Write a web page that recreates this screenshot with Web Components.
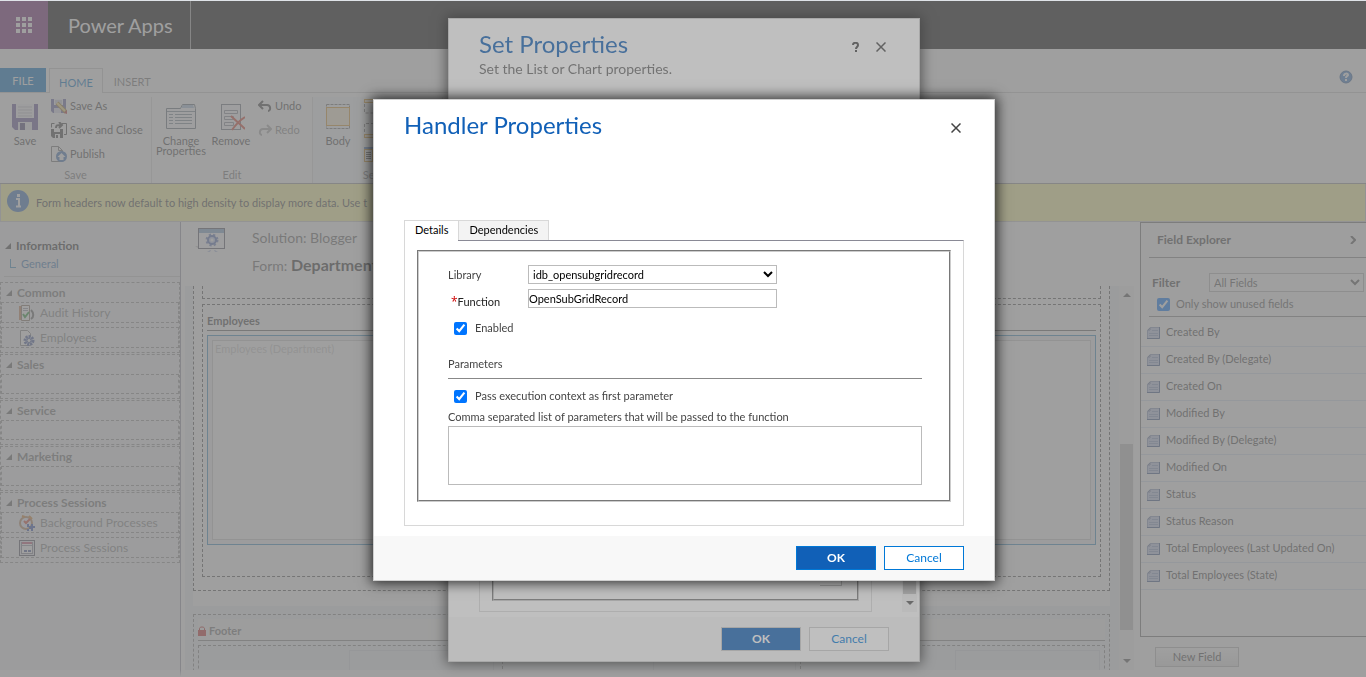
<!DOCTYPE html>
<html lang="en">
<head>
<meta charset="utf-8">
<meta name="viewport" content="width=device-width, initial-scale=1">
<title>Power Apps - Form editor</title>
<style>
  html, body { margin: 0; height: 100%; }
  body {
    font-family: Lato, "Open Sans", sans-serif;
    font-size: 11px;
    line-height: 16px;
    color: #444;
    background: #fff;
    overflow: hidden;
  }
</style>
</head>
<body>
<form-editor></form-editor>

<script>
// Small base class: every element only has to provide its template
class BaseElement extends HTMLElement {
  constructor() {
    super();
    this.attachShadow({ mode: "open" });
  }

  connectedCallback() {
    this.shadowRoot.innerHTML = `<style>*, *::before, *::after { box-sizing: border-box; }</style>${this.template()}`;
  }

  attr(name) { return this.getAttribute(name) || ""; }
}

// Icon markup shared by the ribbon, the navigation and the lists
const ICONS = {
  save: `<svg width="28" height="28" viewBox="0 0 28 28"><path d="M1 1h26v26H4l-3-3z" fill="#6a5a9e"/><rect x="5" y="1" width="18" height="14" fill="#f4f4fa"/><path d="M7 4h14M7 7h14M7 10h14M7 13h14" stroke="#c3c3cc"/><rect x="7" y="19" width="14" height="8" fill="#e8e8f0"/><rect x="9" y="20" width="5" height="7" fill="#4c4478"/></svg>`,
  saveAs: `<svg width="16" height="16" viewBox="0 0 16 16"><path d="M0 1h15v14H2l-2-2z" fill="#6a6aa8"/><rect x="3" y="1" width="9" height="6" fill="#f2f2fa"/><path d="M4 3h7M4 5h7" stroke="#aab"/><rect x="3" y="10" width="7" height="5" fill="#dde"/><path d="M6 5l9 9" stroke="#a8842c" stroke-width="4"/><path d="M6 5l8 8" stroke="#f7dd86" stroke-width="2"/><path d="M13 15l3-3v4z" fill="#b33"/></svg>`,
  saveClose: `<svg width="16" height="16" viewBox="0 0 16 16"><path d="M3.500 1.500h-3v4M11 1.500h4.500v11H13" fill="none" stroke="#444"/><path d="M0 7h12v9H2l-2-2z" fill="#444"/><rect x="3" y="7" width="6" height="3" fill="#fff"/><rect x="4" y="12" width="5" height="4" fill="#fff"/><rect x="5" y="13" width="2" height="3" fill="#444"/><path d="M5 6c0-3 1-3 5-3M8 0l3 3-3 3" fill="none" stroke="#444" stroke-width="2"/></svg>`,
  publish: `<svg width="16" height="16" viewBox="0 0 16 16"><path d="M.5.500h7l4 4v11H.5z" fill="#fff" stroke="#777"/><path d="M7.500.500v4h4" fill="none" stroke="#777"/><circle cx="10.500" cy="10.500" r="5.500" fill="#4274bb"/><path d="M10.500 7l4 4h-2v3h-4v-3h-2z" fill="#fff"/></svg>`,
  properties: `<svg width="30" height="28" viewBox="0 0 30 28"><path d="M.5 5.500h14l2-4h12l1 4v20H.5z" fill="#f8fafc" stroke="#67727c"/><path d="M15 5l2-3h10l1 3z" fill="#a8c2dd"/><path d="M1 8.500h28M3 11.500h4M9 11.500h17M3 14.500h4M9 14.500h17M3 17.500h4M9 17.500h17M3 20.500h4M9 20.500h17" stroke="#7e8c9a"/></svg>`,
  remove: `<svg width="28" height="28" viewBox="0 0 28 28"><rect x="4.500" y="1.500" width="19" height="25" fill="#fafafc" stroke="#6c7480"/><path d="M7.500 7.500h13v3h-13zM7.500 13.500h9v3h-9zM7.500 19.500h9v3h-9z" fill="none" stroke="#8a8f98"/><path d="M14 13c4 4 9 8 14 13M28 14c-5 3-9 7-13 13" fill="none" stroke="#d8432f" stroke-width="2"/></svg>`,
  undo: `<svg width="14" height="12" viewBox="0 0 14 12"><path d="M5 1L1 5l4 4M1 5h8c4 0 4 6 1 6" fill="none" stroke="#444" stroke-width="2"/></svg>`,
  redo: `<svg width="14" height="12" viewBox="0 0 14 12"><path d="M9 1l4 4-4 4M13 5H5c-4 0-4 6-1 6" fill="none" stroke="#aaa" stroke-width="2"/></svg>`,
  section: `<svg width="28" height="28" viewBox="0 0 28 28"><rect x="2.500" y="1.500" width="23" height="24" fill="none" stroke="#777" stroke-dasharray="3 1"/><rect x="2.500" y="4.500" width="23" height="18" fill="#fbecd0" stroke="#d89a2c"/></svg>`,
  header: `<svg width="16" height="16" viewBox="0 0 16 16"><rect x=".5" y="1.500" width="15" height="3" fill="#fbecd0" stroke="#d89a2c"/><path d="M.5 6v9h15" fill="none" stroke="#777" stroke-dasharray="3 2"/></svg>`,
  footer: `<svg width="16" height="16" viewBox="0 0 16 16"><path d="M.5 10V1.500h15" fill="none" stroke="#777" stroke-dasharray="3 2"/><rect x=".5" y="12.500" width="15" height="3" fill="#fbecd0" stroke="#d89a2c"/></svg>`,
  navigation: `<svg width="16" height="16" viewBox="0 0 16 16"><path d="M0 1h16v2H0z" fill="#5c88c8"/><rect x=".5" y="3.500" width="8" height="12" fill="#fff" stroke="#d89a2c"/><path d="M2 6.500h5M2 8.500h5M2 10.500h5M2 12.500h5" stroke="#555"/></svg>`,
  audit: `<svg width="16" height="16" viewBox="0 0 16 16"><path d="M2.500.500h8v15h-8z" fill="#fff" stroke="#887766"/><path d="M1 1v14" stroke="#c8875a" stroke-width="2"/><path d="M4 3.500h5M4 5.500h5" stroke="#99a"/><path d="M4 9l2 3 4-5" fill="none" stroke="#2f9a3b" stroke-width="2"/><path d="M12 5c3 3 3 7 0 9" fill="none" stroke="#666" stroke-width="2"/></svg>`,
  entity: `<svg width="16" height="16" viewBox="0 0 16 16"><path d="M1.500.500h7l3 3v12h-10z" fill="#fff" stroke="#888"/><circle cx="10" cy="10.500" r="4" fill="#a8b8e0" stroke="#4a5fa0" stroke-width="3" stroke-dasharray="2 1"/><circle cx="10" cy="10.500" r="2" fill="#fff" stroke="#4a5fa0"/></svg>`,
  process: `<svg width="16" height="16" viewBox="0 0 16 16"><circle cx="7" cy="8" r="6" fill="#eef" stroke="#b98a5f" stroke-width="2"/><path d="M3 1l3 1M10 1l3 3" stroke="#d8842f" stroke-width="2"/><path d="M5 6l2 2 4-4" fill="none" stroke="#d84b34" stroke-width="2"/><path d="M8 9h2v2h2V9h2v2h2v2h-2v3h-2v-2h-2v2H8v-2h2v-2H8z" fill="#3457b5"/></svg>`,
  session: `<svg width="16" height="16" viewBox="0 0 16 16"><rect x=".5" y=".5" width="15" height="15" fill="#e8e8f0" stroke="#556"/><rect x="2.500" y="2.500" width="11" height="11" fill="#fff" stroke="#889"/><rect x="3" y="2" width="10" height="2" fill="#c65a78"/><path d="M3 5h10v1H3z" fill="#99a"/><path d="M5 10h3v2H5zM9 10h3v2H9z" fill="#4a5a98"/></svg>`,
  field: `<svg width="13" height="12" viewBox="0 0 13 12"><path d="M3 0h10v12H0V3z" fill="#bccbe8"/><path d="M0 11.500h12.500V0" fill="none" stroke="#3f5a8c"/><path d="M.5 3v8M3 .5h9" stroke="#8c9cc0"/><path d="M1 3h2V1z" fill="#fff" stroke="#6c7ca0"/><path d="M5 3.500h6M2 6.500h9M2 8.500h9" stroke="#8fa0c8"/></svg>`,
  form: `<svg width="30" height="28" viewBox="0 0 30 28"><path d="M0 18h4v3z" fill="#ccc"/><rect x="3.500" y=".5" width="26" height="20" fill="#fafafc" stroke="#556"/><path d="M4 1h25v4H4z" fill="#7da5cf"/><circle cx="17" cy="12" r="5" fill="none" stroke="#6d84c4" stroke-width="3" stroke-dasharray="2 2"/><circle cx="17" cy="12" r="4" fill="#c4d0f2" stroke="#5670b8" stroke-width="2"/><circle cx="17" cy="12" r="1.500" fill="#fff"/><path d="M12 24h3l1-2h3l1 2h3l-3-2h-5z" fill="#b3c0e2"/></svg>`,
  lock: `<svg width="8" height="10" viewBox="0 0 8 10"><path d="M1.500 5V2.500c0-2 5-2 5 0V5" fill="none" stroke="#b22" stroke-width="1"/><rect y="4" width="8" height="6" fill="#c82c2c"/></svg>`,
  info: `<svg width="22" height="22" viewBox="0 0 22 22"><circle cx="11" cy="11" r="11" fill="#3d74bd"/><path d="M9 9h3v7M9 16.500h5" fill="none" stroke="#fff" stroke-width="2"/><rect x="10" y="4" width="3" height="3" fill="#fff"/></svg>`,
  help: `<svg width="14" height="14" viewBox="0 0 14 14"><circle cx="7" cy="7" r="6" fill="#3d7dc8" stroke="#2c5d9c"/><path d="M5 6c0-3 4-3 4-1 0 1-2 1-2 3M7 9v2" fill="none" stroke="#fff" stroke-width="2"/></svg>`,
  close: `<svg width="10" height="10" viewBox="0 0 10 10"><path d="M.5.500l9 9M9.500.500l-9 9" fill="none" stroke="#444" stroke-width="1.500"/></svg>`,
  question: `<svg width="8" height="10" viewBox="0 0 8 10"><path d="M1 3c0-3 5-3 5 0 0 2-2 2-2 4M4 8v2" fill="none" stroke="#444" stroke-width="2"/></svg>`
};

// AppBar: black bar with the launcher
class AppBar extends BaseElement {
  template() {
    return /* html */`
      <style>
        :host { display: flex; height: 48px; background: #000; color: #fff; }
        button { display: grid; place-content: center; grid-template-columns: repeat(3, 4px); gap: 2px; width: 48px; border: 0; padding: 0; background: #742774; }
        i { height: 4px; background: #fff; }
        span { display: flex; align-items: center; padding: 0 17px 0 20px; font-size: 20px; border-right: 1px solid #999; }
      </style>
      <button aria-label="App launcher">${"<i></i>".repeat(9)}</button>
      <span>Power Apps</span>
    `;
  }
}

// RibbonTabs: FILE / HOME / INSERT plus the help icon
class RibbonTabs extends BaseElement {
  template() {
    return /* html */`
      <style>
        :host { display: flex; align-items: flex-end; height: 44px; border-bottom: 1px solid #ccc; }
        a { height: 24px; padding: 0 9px; line-height: 28px; color: #777; text-decoration: none; }
        .file { width: 46px; padding: 0; text-align: center; background: #0072c6; color: #fff; line-height: 26px; }
        .active { height: 25px; margin: 0 2px 0 3px; border: 1px solid #ccc; border-bottom: 0; background: #fff; color: #0072c6; margin-bottom: -1px; }
        .help { margin-left: auto; padding: 0 13px 0 0; height: 22px; line-height: 0; }
      </style>
      <a class="file" href="#">FILE</a>
      <a class="active" href="#">HOME</a>
      <a href="#">INSERT</a>
      <a class="help" href="#" aria-label="Help">${ICONS.help}</a>
    `;
  }
}

// RibbonButton: large (icon above) or small (icon at the left)
class RibbonButton extends BaseElement {
  template() {
    return /* html */`
      <style>
        :host { display: block; }
        button { display: flex; align-items: center; gap: 3px; height: 24px; padding: 0; border: 0; background: none; font: inherit; color: #444; white-space: nowrap; }
        :host([large]) button { flex-direction: column; gap: 5px; width: 50px; height: auto; line-height: 10px; white-space: normal; }
        :host([disabled]) button { color: #888; }
        svg { display: block; flex: none; }
      </style>
      <button aria-label="${this.attr("label") || this.textContent}">${ICONS[this.attr("icon")]}<span><slot></slot></span></button>
    `;
  }
}

// RibbonGroup: buttons with the caption of the group below
class RibbonGroup extends BaseElement {
  template() {
    return /* html */`
      <style>
        :host { display: flex; flex-direction: column; justify-content: space-between; border-right: 1px solid #ddd; }
        .row { display: flex; }
        .caption { text-align: center; color: #777; }
      </style>
      <div class="row"><slot></slot></div>
      <div class="caption">${this.attr("caption")}</div>
    `;
  }
}

class RibbonBar extends BaseElement {
  template() {
    return /* html */`
      <style>
        :host { display: flex; height: 91px; padding: 4px 0 0; border-bottom: 1px solid #999; }
        ribbon-group.save { width: 152px; }
        ribbon-group.edit { width: 161px; }
        ribbon-group.select { width: 130px; background: #f6fafc; }
        .col { margin: -3px 0 0 1px; }
        .edit .col { margin-left: 2px; }
        .big { padding-top: 6px; }
        .first { padding-left: 4px; }
      </style>
      <ribbon-group class="save" caption="Save">
        <ribbon-button class="big" large icon="save">Save</ribbon-button>
        <div class="col">
          <ribbon-button icon="saveAs">Save As</ribbon-button>
          <ribbon-button icon="saveClose">Save and Close</ribbon-button>
          <ribbon-button icon="publish">Publish</ribbon-button>
        </div>
      </ribbon-group>
      <ribbon-group class="edit" caption="Edit">
        <ribbon-button class="big first" large icon="properties">Change Properties</ribbon-button>
        <ribbon-button class="big" large icon="remove">Remove</ribbon-button>
        <div class="col">
          <ribbon-button icon="undo">Undo</ribbon-button>
          <ribbon-button icon="redo" disabled>Redo</ribbon-button>
        </div>
      </ribbon-group>
      <ribbon-group class="select" caption="Select">
        <ribbon-button class="big" large icon="section">Body</ribbon-button>
        <div class="col">
          <ribbon-button icon="header" label="Header"></ribbon-button>
          <ribbon-button icon="footer" label="Footer"></ribbon-button>
          <ribbon-button icon="navigation" label="Navigation"></ribbon-button>
        </div>
      </ribbon-group>
    `;
  }
}

class InfoBanner extends BaseElement {
  template() {
    return /* html */`
      <style>
        :host { display: flex; gap: 7px; height: 38px; padding: 6px; border: 1px solid #ccc; border-top: 0; background: #fffa9c; }
        svg { flex: none; }
        span { padding-top: 5px; white-space: nowrap; }
      </style>
      ${ICONS.info}
      <span><slot></slot></span>
    `;
  }
}

// NavGroup: dashed block of the left navigation. Attribute "items": "icon:Label|icon:Label"
class NavGroup extends BaseElement {
  template() {
    const items = this.attr("items").split("|").filter(Boolean).map((item) => {
      const [icon, label] = item.split(":");
      return `<a href="#">${ICONS[icon]}${label}</a>`;
    }).join("");
    return /* html */`
      <style>
        :host { display: block; margin-bottom: 1px; border: 1px dashed #999; }
        h3 { display: flex; align-items: center; gap: 5px; height: 19px; margin: 0; padding-left: 5px; font-size: 12px; font-weight: 700; color: #777; }
        h3::before { content: ""; border: 3px solid transparent; border-right-color: #666; border-bottom-color: #666; }
        a, .empty { display: flex; align-items: center; gap: 5px; height: 21px; margin-bottom: 4px; padding-left: 17px; border: 1px dashed #999; color: #888; font-size: 12px; text-decoration: none; }
        .empty { height: 20px; }
      </style>
      <h3>${this.attr("heading")}</h3>
      ${items || `<div class="empty"></div>`}
    `;
  }
}

class FormNav extends BaseElement {
  template() {
    return /* html */`
      <style>
        :host { display: block; padding-top: 14px; background: #f0f3f7; border-right: 1px solid #99a; border-bottom: 7px solid #fff; }
        h3 { display: flex; align-items: center; gap: 5px; margin: 0; padding-left: 5px; height: 20px; font-size: 12px; font-weight: 700; color: #333; }
        h3::before { content: ""; border: 3px solid transparent; border-right-color: #444; border-bottom-color: #444; }
        .tab { display: flex; gap: 5px; margin: 0 0 5px 4px; padding: 0 0 4px 6px; border-bottom: 1px solid #ccc; color: #3b79b7; text-decoration: none; }
        .tab::before { content: ""; width: 6px; height: 9px; margin-top: 3px; border: solid #3b8ec2; border-width: 0 0 1px 1px; }
      </style>
      <h3>Information</h3>
      <a class="tab" href="#">General</a>
      <nav-group heading="Common" items="audit:Audit History|entity:Employees"></nav-group>
      <nav-group heading="Sales"></nav-group>
      <nav-group heading="Service"></nav-group>
      <nav-group heading="Marketing"></nav-group>
      <nav-group heading="Process Sessions" items="process:Background Processes|session:Process Sessions"></nav-group>
    `;
  }
}

// ScrollRail: scroll bar of a panel, thumb placed with --before and --after
class ScrollRail extends BaseElement {
  template() {
    return /* html */`
      <style>
        :host { display: flex; flex-direction: column; align-items: center; width: 15px; background: #f4f4f4; }
        .up, .down { flex: none; width: 0; height: 0; margin: 7px 0; border: 4px solid transparent; }
        .up { border-bottom-color: #555; border-top: 0; }
        .down { border-top-color: #555; border-bottom: 0; }
        .track { flex: 1; align-self: stretch; display: flex; flex-direction: column; padding: 0 1px; }
        .thumb { flex: 1; margin: var(--before, 0) 0 var(--after, 0); background: #c1c1c1; }
      </style>
      <div class="up"></div>
      <div class="track"><div class="thumb"></div></div>
      <div class="down"></div>
    `;
  }
}

// FormCanvas: the form being edited, with its body and its footer
class FormCanvas extends BaseElement {
  template() {
    return /* html */`
      <style>
        :host { display: flex; flex-direction: column; min-width: 0; min-height: 0; padding: 6px 6px 7px 4px; background: #fff; }
        header { flex: none; display: flex; gap: 27px; height: 58px; padding-left: 10px; font-size: 14px; color: #666; }
        header p { margin: 0; height: 27px; line-height: 20px; white-space: nowrap; }
        header b { font-size: 16px; font-weight: 700; color: #333; }
        .view { flex: 1; display: flex; min-height: 0; background: #eef2f6; }
        .pages { flex: 1; margin: 0 9px 0 8px; overflow: hidden; }
        .body { padding-bottom: 15px; background: #fff; }
        .tabs { border: 1px dashed #555; border-top: 0; padding: 0 8px 13px; }
        .part { height: 13px; margin-bottom: 5px; border: 1px dashed #555; border-top: 0; }
        .section { height: 273px; padding: 8px 4px 31px; border: 1px dashed #555; display: flex; flex-direction: column; }
        h4 { margin: 0; height: 18px; font-size: 11px; font-weight: 700; color: #444; border-bottom: 1px solid #666; }
        .grid { flex: 1; margin-top: 4px; padding: 4px; border: 1px solid #3b8ec2; background: #f0f3f7; }
        .grid div { height: 100%; padding-left: 2px; border: 1px solid #ccc; background: #fff; color: #ccc; }
        .footer { margin-top: 8px; padding: 4px 4px 0; border: 1px dashed #888; }
        .footer h4 { display: flex; gap: 3px; align-items: center; height: 22px; padding-top: 2px; color: #777; border-color: #888; background: #f6f6f4; }
        .cells { display: grid; grid-template-columns: 1fr 1fr 1fr; gap: 4px; margin-top: 4px; border: 1px dashed #888; height: 80px; }
        .cells div { padding: 4px 4px 0 50%; border: 0 dashed #888; }
        .cells div:nth-child(2) { border-width: 0 1px; }
        .cells div::before { content: ""; display: block; height: 60px; border: 1px solid #d8dce4; }
      </style>
      <header>
        ${ICONS.form}
        <div>
          <p>Solution: Blogger</p>
          <p>Form: <b>Department</b></p>
        </div>
      </header>
      <div class="view">
        <div class="pages">
          <div class="body">
            <div class="tabs">
              <div class="part"></div>
              <div class="section">
                <h4>Employees</h4>
                <div class="grid"><div>Employees (Department)</div></div>
              </div>
            </div>
          </div>
          <div class="footer">
            <h4>${ICONS.lock} Footer</h4>
            <div class="cells"><div></div><div></div><div></div></div>
          </div>
        </div>
        <scroll-rail style="--before: 140px; --after: 22px"></scroll-rail>
      </div>
    `;
  }
}

// FieldExplorer: panel on the right with the available fields
class FieldExplorer extends BaseElement {
  template() {
    const fields = ["Created By", "Created By (Delegate)", "Created On", "Modified By", "Modified By (Delegate)",
      "Modified On", "Status", "Status Reason", "Total Employees (Last Updated On)", "Total Employees (State)"];
    return /* html */`
      <style>
        :host { display: flex; flex-direction: column; background: #fff; }
        .panel { height: 415px; border: 1px solid #777; border-right: 0; }
        .top { height: 97px; padding-left: 8px; background: #f8f8f8; }
        h2 { display: flex; justify-content: space-between; align-items: center; height: 35px; margin: 0; padding: 0 10px 0 8px; border-bottom: 1px solid #888; font-size: 12px; font-weight: 700; color: #444; }
        .filter { display: flex; align-items: center; margin-top: 15px; padding: 0 2px 0 3px; }
        .filter label { width: 57px; font-size: 12px; font-weight: 700; }
        select { flex: 1; min-width: 0; height: 19px; padding: 0; border: 1px solid #bbb; background: #fff; font: inherit; color: #555; }
        .unused { display: flex; align-items: center; gap: 6px; height: 25px; padding-left: 8px; border-bottom: 1px solid #888; color: #555; }
        input { width: 13px; height: 13px; margin: 0; }
        ul { margin: 0; padding: 0; list-style: none; }
        li { display: flex; align-items: center; gap: 6px; height: 27px; padding: 0 0 3px 6px; border-bottom: 1px solid #d5e2f2; }
        li svg { margin-top: 3px; }
        .actions { padding: 10px 15px; }
        .actions button { width: 84px; height: 20px; padding: 0; border: 1px solid #bbb; background: linear-gradient(#fff, #e4e4e4); font: inherit; color: #444; }
      </style>
      <div class="panel">
        <div class="top">
          <h2>Field Explorer <svg width="6" height="8" viewBox="0 0 6 8"><path d="M1 0l4 4-4 4" fill="none" stroke="#555" stroke-width="2"/></svg></h2>
          <div class="filter"><label for="filter">Filter</label><select id="filter"><option>All Fields</option></select></div>
          <div class="unused"><input type="checkbox" id="unused" checked><label for="unused">Only show unused fields</label></div>
        </div>
        <ul>${fields.map((name) => `<li>${ICONS.field}${name}</li>`).join("")}</ul>
      </div>
      <div class="actions"><button>New Field</button></div>
    `;
  }
}

// ModalDialog: grey layer over everything below it and a centered dialog
class ModalDialog extends BaseElement {
  template() {
    const sub = this.attr("subheading");
    return /* html */`
      <style>
        :host { position: fixed; inset: 1px 0 0; display: flex; align-items: center; justify-content: center; padding: 2px 0 0 2px; background: rgba(128, 128, 128, .5); }
        section { display: flex; flex-direction: column; border: 1px solid #d0d0d0; background: #fff; width: var(--dialog-width, 622px); height: var(--dialog-height, auto); box-shadow: 0 0 12px 2px rgba(0, 0, 0, .75); }
        header { flex: none; display: flex; justify-content: space-between; height: var(--header-height, 120px); padding: 11px 33px 0 30px; }
        h1 { margin: 0; font-size: 24px; line-height: 28px; font-weight: 400; color: #1160b7; }
        p { margin: 0; font-size: 14px; line-height: 22px; color: #666; }
        .tools { display: flex; gap: 16px; padding-top: 8px; height: 26px; }
        .tools button { display: grid; place-items: center; padding: 0; border: 0; background: none; }
        .content { flex: 1; min-height: 0; padding: 0 30px var(--content-bottom, 10px); }
        footer { flex: none; display: flex; justify-content: flex-end; gap: 8px; padding: 10px 30px; background: #f8f8f8; }
        footer button { width: 80px; height: 24px; padding: 0; border: 1px solid var(--button-border, #0078d7); background: #fff; font: inherit; font-size: 12px; color: #0078d7; }
        footer .ok { background: #1160b7; color: #fff; font-weight: 700; }
      </style>
      <section role="dialog" aria-label="${this.attr("heading")}">
        <header>
          <div><h1>${this.attr("heading")}</h1>${sub ? `<p>${sub}</p>` : ""}</div>
          <div class="tools">
            ${this.hasAttribute("help") ? `<button aria-label="Help">${ICONS.question}</button>` : ""}
            <button aria-label="Close">${ICONS.close}</button>
          </div>
        </header>
        <div class="content"><slot></slot></div>
        <footer><button class="ok">OK</button><button>Cancel</button></footer>
      </section>
    `;
  }
}

// ListProperties: lower part of the panel of the first dialog
class ListProperties extends BaseElement {
  template() {
    return /* html */`
      <style>
        :host { display: flex; height: 100%; margin-right: -28px; }
        .page { flex: 1; margin: 0 30px 5px 0; padding: 10px 12px 10px 12px; border: 1px solid #ddd; }
        .box { height: 100%; padding: 0 15px 13px; border: 2px groove #ccc; display: flex; align-items: flex-end; justify-content: flex-end; }
        .box div { width: 22px; height: 22px; border: solid #bbb; border-width: 0 1px 1px 0; }
        scroll-rail { margin-bottom: 5px; }
      </style>
      <div class="page"><div class="box"><div></div></div></div>
      <scroll-rail></scroll-rail>
    `;
  }
}

// HandlerProperties: tabs and form of the event handler
class HandlerProperties extends BaseElement {
  template() {
    return /* html */`
      <style>
        :host { display: block; color: #444; }
        .tabs { display: flex; height: 20px; }
        .tabs button { padding: 0 10px 2px; border: 1px solid #d8d8d8; border-bottom: 0; background: #f3f3f3; font: inherit; color: #000; }
        .tabs .active { height: 21px; background: #fff; position: relative; border-right: 0; }
        .page { padding: 9px 12px 23px; border: 1px solid #d8d8d8; border-top-color: #8a8a96; }
        fieldset { margin: 0; padding: 13px 27px 15px 29px; border: 2px groove #ccc; }
        .fields { display: grid; grid-template-columns: 80px 249px; row-gap: 5px; align-items: center; }
        .fields label:last-of-type { padding: 6px 0 0 3px; line-height: 13px; color: #222; }
        .fields em { color: #c00; font-family: "Open Sans", sans-serif; font-style: normal; font-size: 12px; }
        select, input[type=text] { height: 19px; padding: 0; border: 1px solid #bbb; border-radius: 0; background: #fff; font: inherit; color: #000; }
        .check { display: flex; align-items: center; gap: 8px; padding-left: 6px; height: 16px; }
        .check input { width: 13px; height: 13px; margin: 0; }
        .enabled { margin-top: 12px; }
        h3 { margin: 20px 0 9px; padding-bottom: 6px; border-bottom: 1px solid #888; font-size: 11px; font-weight: 400; }
        .list { display: block; margin-top: 5px; }
        textarea { display: block; width: 100%; height: 59px; margin-top: 1px; padding: 2px; border: 1px solid #bbb; resize: none; font: inherit; }
      </style>
      <div class="tabs"><button class="active">Details</button><button>Dependencies</button></div>
      <div class="page">
        <fieldset>
          <div class="fields">
            <label for="library">Library</label>
            <select id="library"><option>idb_opensubgridrecord</option></select>
            <label for="function"><em>*</em>Function</label>
            <input type="text" id="function" value="OpenSubGridRecord">
          </div>
          <div class="check enabled"><input type="checkbox" id="enabled" checked><label for="enabled">Enabled</label></div>
          <h3>Parameters</h3>
          <div class="check"><input type="checkbox" id="context" checked><label for="context">Pass execution context as first parameter</label></div>
          <label class="list" for="params">Comma separated list of parameters that will be passed to the function</label>
          <textarea id="params"></textarea>
        </fieldset>
      </div>
    `;
  }
}

class FormEditor extends BaseElement {
  template() {
    return /* html */`
      <style>
        :host { display: grid; grid-template-rows: auto auto auto auto minmax(0, 1fr); height: 100vh; border-top: 1px solid #dfe3e8; box-sizing: border-box; }
        main { display: grid; grid-template: minmax(0, 1fr) / 181px minmax(0, 1fr) 226px; min-height: 0; }
        .list { --dialog-width: 472px; --dialog-height: calc(100vh - 33px); --header-height: 88px; --content-bottom: 0; --button-border: #ccc; }
      </style>
      <app-bar></app-bar>
      <ribbon-tabs></ribbon-tabs>
      <ribbon-bar></ribbon-bar>
      <info-banner>Form headers now default to high density to display more data. Use t</info-banner>
      <main>
        <form-nav></form-nav>
        <form-canvas></form-canvas>
        <field-explorer></field-explorer>
      </main>
      <modal-dialog class="list" heading="Set Properties" subheading="Set the List or Chart properties." help>
        <list-properties></list-properties>
      </modal-dialog>
      <modal-dialog heading="Handler Properties">
        <handler-properties></handler-properties>
      </modal-dialog>
    `;
  }
}

customElements.define("app-bar", AppBar);
customElements.define("ribbon-tabs", RibbonTabs);
customElements.define("ribbon-button", RibbonButton);
customElements.define("ribbon-group", RibbonGroup);
customElements.define("ribbon-bar", RibbonBar);
customElements.define("info-banner", InfoBanner);
customElements.define("nav-group", NavGroup);
customElements.define("form-nav", FormNav);
customElements.define("scroll-rail", ScrollRail);
customElements.define("form-canvas", FormCanvas);
customElements.define("field-explorer", FieldExplorer);
customElements.define("modal-dialog", ModalDialog);
customElements.define("list-properties", ListProperties);
customElements.define("handler-properties", HandlerProperties);
customElements.define("form-editor", FormEditor);
</script>
</body>
</html>
